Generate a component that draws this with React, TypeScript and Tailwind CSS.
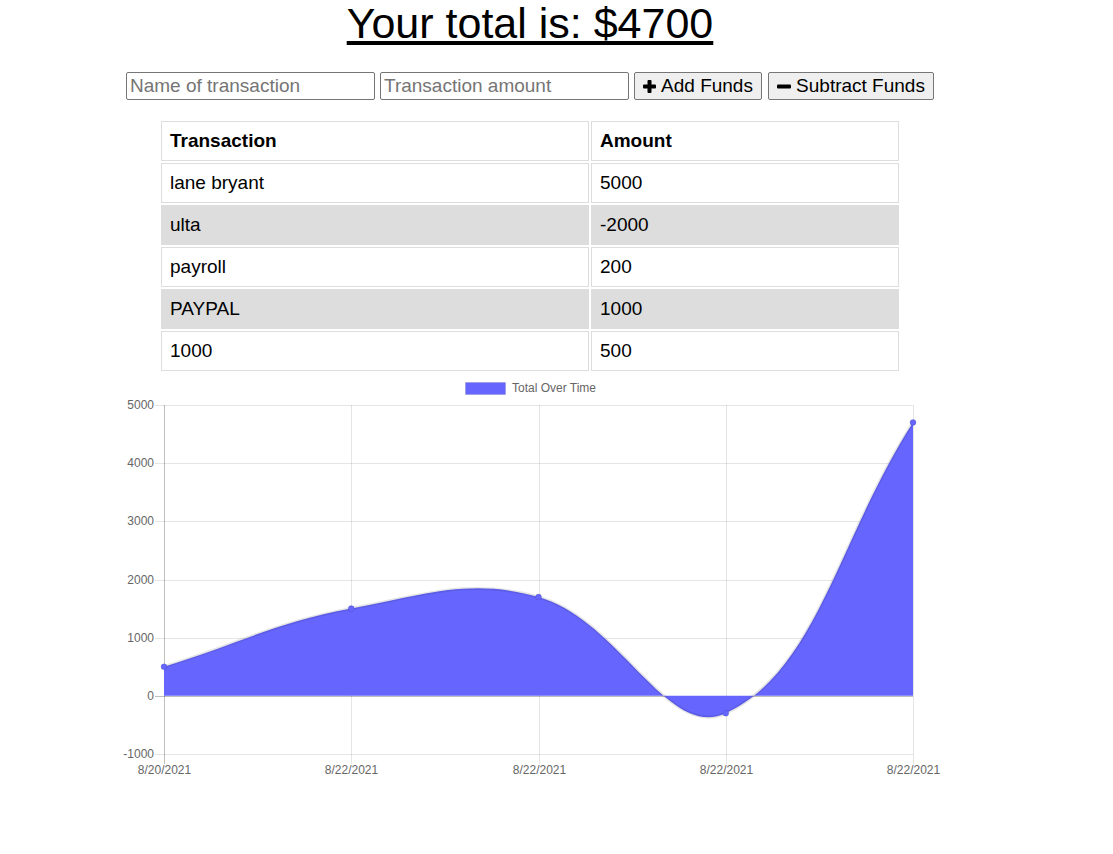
import { useMemo } from 'react';

const rows = [
  { name: 'lane bryant', amount: '5000' },
  { name: 'ulta', amount: '-2000' },
  { name: 'payroll', amount: '200' },
  { name: 'PAYPAL', amount: '1000' },
  { name: '1000', amount: '500' },
];

const data = [500, 1500, 1700, -300, 4700];
const labels = ['8/20/2021', '8/22/2021', '8/22/2021', '8/22/2021', '8/22/2021'];

// chart area in page coordinates
const LEFT = 164;
const RIGHT = 913;
const TOP = 405;
const BOTTOM = 754;
const yPix = (v: number) => BOTTOM - ((v + 1000) * (BOTTOM - TOP)) / 6000;

function buildPath() {
  const pts = data.map((v, i) => ({ x: LEFT + (i * (RIGHT - LEFT)) / 4, y: yPix(v) }));
  const t = 0.4;
  const cap = (p: { x: number; y: number }) => ({
    x: Math.min(RIGHT, Math.max(LEFT, p.x)),
    y: Math.min(BOTTOM, Math.max(TOP, p.y)),
  });
  const ctrl = pts.map((cur, i) => {
    const prev = pts[Math.max(0, i - 1)];
    const next = pts[Math.min(pts.length - 1, i + 1)];
    const d01 = Math.hypot(cur.x - prev.x, cur.y - prev.y);
    const d12 = Math.hypot(next.x - cur.x, next.y - cur.y);
    let s01 = d01 / (d01 + d12);
    let s12 = d12 / (d01 + d12);
    if (isNaN(s01)) s01 = 0;
    if (isNaN(s12)) s12 = 0;
    const fa = t * s01;
    const fb = t * s12;
    return {
      p: cap({ x: cur.x - fa * (next.x - prev.x), y: cur.y - fa * (next.y - prev.y) }),
      n: cap({ x: cur.x + fb * (next.x - prev.x), y: cur.y + fb * (next.y - prev.y) }),
    };
  });
  let line = `M${pts[0].x},${pts[0].y}`;
  for (let i = 1; i < pts.length; i++) {
    const a = ctrl[i - 1].n;
    const b = ctrl[i].p;
    line += ` C${a.x},${a.y} ${b.x},${b.y} ${pts[i].x},${pts[i].y}`;
  }
  const zero = yPix(0);
  const fill = `${line} L${RIGHT},${zero} L${LEFT},${zero} Z`;
  return { pts, line, fill };
}

function Chart() {
  const { pts, line, fill } = useMemo(buildPath, []);
  const ticks = [5000, 4000, 3000, 2000, 1000, 0, -1000];
  const font = { fontFamily: '"Liberation Sans", Arial, sans-serif' };
  return (
    <svg width={1060} height={420} viewBox="0 375 1060 420" className="block mt-[2px]" style={font}>
      {/* legend */}
      <rect x={465.5} y={382.5} width={40} height={12} fill="#6666ff" stroke="rgba(0,0,0,0.1)" />
      <text x={512} y={388.5} fontSize={12} fill="#666" dominantBaseline="middle">
        Total Over Time
      </text>

      {/* horizontal grid */}
      {ticks.map((v) => {
        const y = Math.round(yPix(v)) + 0.5;
        return (
          <g key={v}>
            <line
              x1={155}
              x2={RIGHT}
              y1={y}
              y2={y}
              stroke={v === 0 ? 'rgba(0,0,0,0.25)' : 'rgba(0,0,0,0.1)'}
            />
            <text x={154} y={y} fontSize={12} fill="#666" textAnchor="end" dominantBaseline="middle">
              {v}
            </text>
          </g>
        );
      })}

      {/* vertical grid */}
      {labels.map((l, i) => {
        const x = Math.round(LEFT + (i * (RIGHT - LEFT)) / 4) + 0.5;
        return (
          <g key={i}>
            <line
              x1={x}
              x2={x}
              y1={TOP}
              y2={764}
              stroke={i === 0 ? 'rgba(0,0,0,0.25)' : 'rgba(0,0,0,0.1)'}
            />
            <text x={x} y={771} fontSize={12} fill="#666" textAnchor="middle" dominantBaseline="middle">
              {l}
            </text>
          </g>
        );
      })}

      <path d={fill} fill="#6666ff" />
      <path d={line} fill="none" stroke="rgba(0,0,0,0.1)" strokeWidth={3} />
      {pts.map((p, i) => (
        <circle key={i} cx={p.x} cy={p.y} r={3} fill="#6666ff" stroke="rgba(0,0,0,0.1)" />
      ))}
    </svg>
  );
}

function PlusIcon() {
  return (
    <svg width="13" height="13" viewBox="0 0 13 13" className="shrink-0">
      <rect x="4.5" y="0" width="4" height="13" rx="1" fill="#000" />
      <rect x="0" y="4.5" width="13" height="4" rx="1" fill="#000" />
    </svg>
  );
}

function MinusIcon() {
  return (
    <svg width="14" height="13" viewBox="0 0 14 13" className="shrink-0">
      <rect x="0" y="4.5" width="14" height="4" rx="1" fill="#000" />
    </svg>
  );
}

export default function App() {
  return (
    <div className="w-[1060px] bg-white text-black font-['Liberation_Sans',Arial,sans-serif]">
      <h1 className="text-center text-[43px] leading-[42px] pt-[2px] font-normal">
        <span className="underline">Your total is: $4700</span>
      </h1>

      <div className="mt-[28px] flex justify-center gap-[5px] text-[19px]">
        <input
          className="w-[249px] h-[28px] border border-[#767676] rounded-[2px] px-[3px] placeholder:text-[#757575] outline-none"
          placeholder="Name of transaction"
        />
        <input
          className="w-[249px] h-[28px] border border-[#767676] rounded-[2px] px-[3px] placeholder:text-[#757575] outline-none"
          placeholder="Transaction amount"
        />
        <button className="w-[128px] h-[28px] border border-[#767676] rounded-[2px] bg-[#efefef] flex items-center justify-center gap-[5px]">
          <PlusIcon />
          <span>Add Funds</span>
        </button>
        <button className="ml-[1px] w-[166px] h-[28px] border border-[#767676] rounded-[2px] bg-[#efefef] flex items-center justify-center gap-[5px]">
          <MinusIcon />
          <span>Subtract Funds</span>
        </button>
      </div>

      <table className="mt-[19px] mx-auto w-[742px] table-fixed border-separate border-spacing-[2px] text-[19px] leading-[22px]">
        <thead>
          <tr>
            <th className="w-[428px] text-left font-bold border border-[#dddddd] px-[8px] py-[8px]">Transaction</th>
            <th className="text-left font-bold border border-[#dddddd] px-[8px] py-[8px]">Amount</th>
          </tr>
        </thead>
        <tbody>
          {rows.map((r, i) => (
            <tr key={i} className={i % 2 === 1 ? 'bg-[#dddddd]' : ''}>
              <td className="border border-[#dddddd] px-[8px] py-[8px]">{r.name}</td>
              <td className="border border-[#dddddd] px-[8px] py-[8px]">{r.amount}</td>
            </tr>
          ))}
        </tbody>
      </table>

      <Chart />
    </div>
  );
}
